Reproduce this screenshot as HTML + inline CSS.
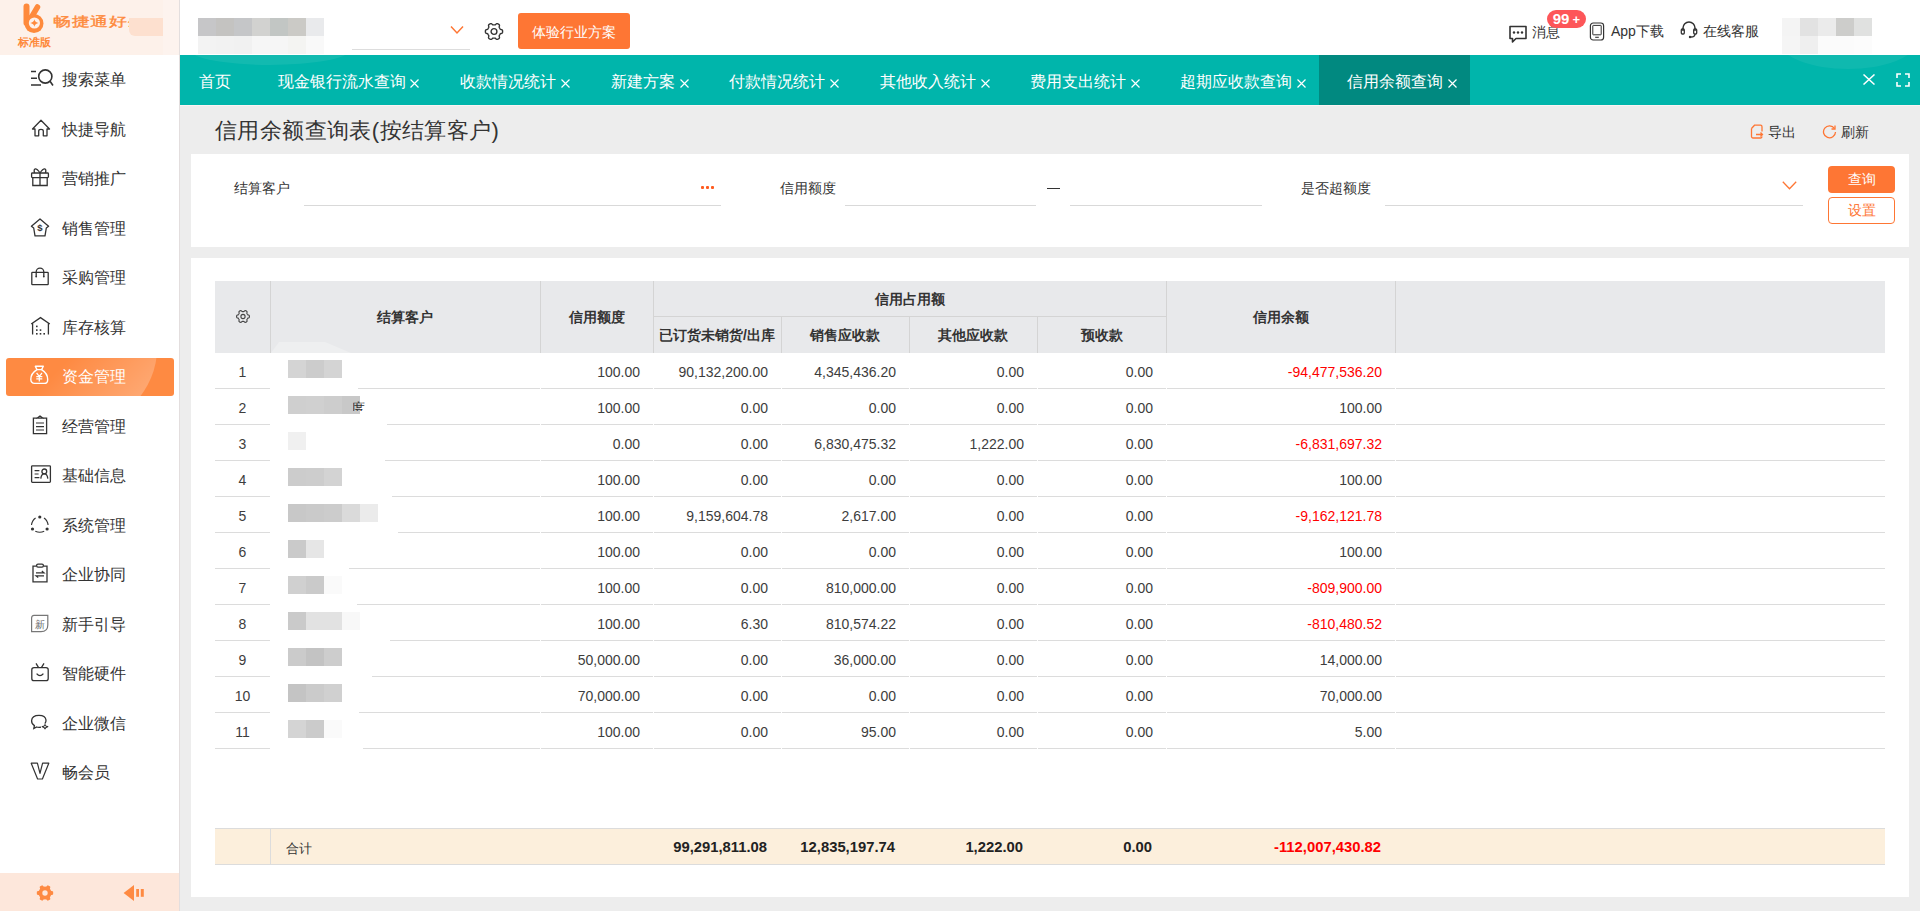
<!DOCTYPE html><html><head><meta charset="utf-8"><title>信用余额查询</title><style>
*{box-sizing:border-box;margin:0;padding:0}
html,body{width:1920px;height:911px;overflow:hidden;background:#ededed;font-family:"Liberation Sans",sans-serif;color:#333}
.a{position:absolute}
.side{position:absolute;left:0;top:0;width:180px;height:911px;background:#fff;border-right:1px solid #e3dede}
.logo{position:absolute;left:0;top:0;width:179px;height:55px;background:#fdf1ea}
.mi{position:absolute;left:62px;font-size:16px;line-height:20px;color:#333;white-space:nowrap}
.ic{position:absolute;left:30px;width:22px;height:22px}
.hdr{position:absolute;left:180px;top:0;width:1740px;height:55px;background:#fff}
.tabs{position:absolute;left:180px;top:55px;width:1740px;height:50px;background:#00b5ab}
.tab{position:absolute;top:0;height:50px;line-height:50px;font-size:16px;color:#fff;white-space:nowrap}
.x{position:absolute;top:24px;width:9px;height:9px}
.card{position:absolute;left:191px;width:1718px;background:#fff}
.lbl{position:absolute;font-size:14px;line-height:16px;color:#333;white-space:nowrap}
.ul{position:absolute;height:1px;background:#d9d9d9}
.btn{position:absolute;width:67px;height:27px;border-radius:4px;font-size:14px;line-height:27px;text-align:center}
.th{position:absolute;background:#e8e9eb;font-size:14px;font-weight:bold;color:#333;text-align:center;white-space:nowrap}
.td{position:absolute;font-size:14px;color:#3d3d3d;transform:scaleY(1.1);text-align:right;white-space:nowrap;line-height:36px;height:36px}
.red{color:#ff0000}
.vl{position:absolute;width:1px;background:#d4d4d4}
.hl{position:absolute;height:1px;background:#dcdcdc}
.blk{position:absolute;width:18px;height:18px}
</style></head><body>
<div class="side"></div>
<div class="logo"></div>
<svg class="a" style="left:23px;top:3px" width="22" height="31" viewBox="0 0 22 31">
<path d="M3.5 3.5 L3.5 20" stroke="#fe8a3c" stroke-width="6" stroke-linecap="round" fill="none"/>
<path d="M14.5 4 L8 15" stroke="#fe8a3c" stroke-width="5.5" stroke-linecap="round" fill="none"/>
<circle cx="11" cy="20.5" r="9.5" fill="#fe8a3c"/>
<circle cx="11.4" cy="20" r="5.6" fill="#fdf1ea"/>
<path d="M11.4 16.2 Q12 19.4 15.6 20 Q12 20.6 11.4 23.8 Q10.8 20.6 7.2 20 Q10.8 19.4 11.4 16.2Z" fill="#fe8a3c"/>
</svg>
<div class="a" style="left:53px;top:10px;width:77px;height:24px;overflow:hidden"><div class="a" style="left:0;top:4px;font-size:13px;line-height:16px;font-weight:normal;-webkit-text-stroke:0.35px #fe8a3c;color:#fe8a3c;letter-spacing:0.5px;white-space:nowrap;transform:scaleX(1.38);transform-origin:0 0">畅捷通好生</div></div>
<div class="a" style="left:129px;top:18px;width:34px;height:18px;background:#fde0cf;border-bottom-left-radius:6px"></div>
<div class="a" style="left:163px;top:0px;width:16px;height:55px;background:#fdf3ee"></div>
<div class="a" style="left:18px;top:36px;font-size:11px;line-height:13px;font-weight:bold;color:#fe8a3c;white-space:nowrap">标准版</div>
<div class="a" style="left:6px;top:358px;width:168px;height:38px;border-radius:3px;overflow:hidden;background:#fe8a42"><div class="a" style="left:-5px;top:-88px;width:156px;height:156px;border-radius:50%;background:linear-gradient(135deg,rgba(255,255,255,0) 50%,rgba(255,255,255,0.25) 85%)"></div></div>
<div class="mi" style="top:70.0px;color:#333">搜索菜单</div>
<div class="mi" style="top:119.5px;color:#333">快捷导航</div>
<div class="mi" style="top:169.0px;color:#333">营销推广</div>
<div class="mi" style="top:218.5px;color:#333">销售管理</div>
<div class="mi" style="top:268.0px;color:#333">采购管理</div>
<div class="mi" style="top:317.5px;color:#333">库存核算</div>
<div class="mi" style="top:367.0px;color:#fff">资金管理</div>
<div class="mi" style="top:416.5px;color:#333">经营管理</div>
<div class="mi" style="top:466.0px;color:#333">基础信息</div>
<div class="mi" style="top:515.5px;color:#333">系统管理</div>
<div class="mi" style="top:565.0px;color:#333">企业协同</div>
<div class="mi" style="top:614.5px;color:#333">新手引导</div>
<div class="mi" style="top:664.0px;color:#333">智能硬件</div>
<div class="mi" style="top:713.5px;color:#333">企业微信</div>
<div class="mi" style="top:763.0px;color:#333">畅会员</div>
<svg class="a" style="left:29px;top:67px" width="26" height="22" viewBox="0 0 26 22"><path d="M2 4.5 H7 M2 11.3 H8 M2 18 H12" stroke="#333" stroke-width="1.6"/><circle cx="16.3" cy="9.5" r="6.6" stroke="#333" stroke-width="1.6" fill="none"/><path d="M21 14.2 L24 18.5" stroke="#333" stroke-width="1.6"/></svg>
<svg class="a" style="left:31px;top:119px" width="20" height="18" viewBox="0 0 20 18"><path d="M1.5 10 L10 1.2 L18.5 10 H16 V16.8 H12.3 V12 Q12.3 10.3 10 10.3 Q7.7 10.3 7.7 12 V16.8 H4 V10 Z" stroke="#333" stroke-width="1.3" fill="none" stroke-linejoin="round"/></svg>
<svg class="a" style="left:30px;top:167px" width="20" height="20" viewBox="0 0 20 20"><rect x="1.6" y="6" width="16.8" height="4.6" rx="0.8" stroke="#333" stroke-width="1.3" fill="none"/><path d="M2.8 10.6 V18.5 H17.2 V10.6 M10 6 V18.5" stroke="#333" stroke-width="1.3" fill="none"/><path d="M10 6 Q7 1.5 5 2 Q3.6 2.6 4.5 6 M10 6 Q13 1.5 15 2 Q16.4 2.6 15.5 6" stroke="#333" stroke-width="1.3" fill="none"/></svg>
<svg class="a" style="left:30px;top:218px" width="20" height="19" viewBox="0 0 20 19"><path d="M10 1 L18.6 8.3 L16.3 10 L15 17.8 H5 L3.7 10 L1.4 8.3 Z" stroke="#333" stroke-width="1.3" fill="none" stroke-linejoin="round"/><text x="10" y="13.3" font-size="9.5" font-family="Liberation Sans" font-weight="bold" text-anchor="middle" fill="#333">$</text></svg>
<svg class="a" style="left:30px;top:266px" width="20" height="20" viewBox="0 0 20 20"><rect x="1.8" y="6.4" width="16.4" height="12.3" rx="0.6" stroke="#333" stroke-width="1.3" fill="none"/><path d="M6.2 10.4 V6 A3.8 3.8 0 0 1 13.8 6 V10.4" stroke="#333" stroke-width="1.3" fill="none"/><circle cx="6.2" cy="10.6" r="0.9" fill="#333"/><circle cx="13.8" cy="10.6" r="0.9" fill="#333"/></svg>
<svg class="a" style="left:30px;top:316px" width="21" height="20" viewBox="0 0 21 20"><path d="M1.2 8 L10.5 1.6 L19.8 8 M2.6 7.4 V18.6 M18.4 7.4 V18.6" stroke="#333" stroke-width="1.3" fill="none"/><g fill="#333"><rect x="6" y="9.6" width="1.6" height="1.6"/><rect x="6" y="13.3" width="1.6" height="1.6"/><rect x="9.7" y="13.3" width="1.6" height="1.6"/><rect x="6" y="17" width="1.6" height="1.6"/><rect x="9.7" y="17" width="1.6" height="1.6"/><rect x="13.4" y="17" width="1.6" height="1.6"/></g></svg>
<svg class="a" style="left:29px;top:365px" width="21" height="20" viewBox="0 0 21 20"><path d="M6.3 1.3 H14.3 L12.6 4.6 H8 Z" stroke="#fff" stroke-width="1.4" fill="none" stroke-linejoin="round"/><path d="M8 4.6 Q1.6 8.4 1.8 14.6 Q2 18.4 5.5 18.4 H15.2 Q18.8 18.4 18.7 14.6 Q18.8 8.4 12.6 4.6" stroke="#fff" stroke-width="1.4" fill="none"/><path d="M7.6 8 L10.3 11.3 L13 8 M7.3 11.6 H13.3 M7.3 13.8 H13.3 M10.3 11.3 V16.4" stroke="#fff" stroke-width="1.2" fill="none"/></svg>
<svg class="a" style="left:31px;top:415px" width="18" height="20" viewBox="0 0 18 20"><path d="M6 3.2 H2.4 V18.6 H15.6 V3.2 H12" stroke="#333" stroke-width="1.3" fill="none"/><path d="M6 3.2 L9 1 L12 3.2 Z" stroke="#333" stroke-width="1.3" fill="none" stroke-linejoin="round"/><path d="M5 8 H13 M5 11.6 H13 M5 15 H13" stroke="#333" stroke-width="1.2"/></svg>
<svg class="a" style="left:30px;top:464px" width="22" height="20" viewBox="0 0 22 20"><rect x="1.6" y="1.8" width="18.8" height="16.6" rx="0.8" stroke="#333" stroke-width="1.3" fill="none"/><path d="M4.6 6.6 H9.4 M4.6 10 H8.6 M4.6 13.6 H9.4" stroke="#333" stroke-width="1.2"/><circle cx="14.3" cy="7.4" r="2.4" stroke="#333" stroke-width="1.3" fill="none"/><path d="M10.8 14.6 Q11.3 9.9 14.3 9.9 Q17.3 9.9 17.8 14.6" stroke="#333" stroke-width="1.3" fill="none"/></svg>
<svg class="a" style="left:30px;top:514px" width="20" height="20" viewBox="0 0 20 20"><g stroke="#333" stroke-width="1.1" fill="none"><path d="M5.6 4 Q2.2 6.2 1.5 11"/><path d="M14 4 Q17.4 6.2 18.1 11"/><path d="M5.3 17.3 Q9.8 19.3 14.2 17.3"/></g><circle cx="9.8" cy="3" r="1.6" fill="#333"/><circle cx="2.5" cy="15" r="1.6" fill="#333"/><circle cx="17.1" cy="15" r="1.6" fill="#333"/></svg>
<svg class="a" style="left:31px;top:563px" width="18" height="20" viewBox="0 0 18 20"><path d="M5.3 3.2 H2 V18.8 H16 V3.2 H12.7" stroke="#333" stroke-width="1.3" fill="none"/><rect x="5.6" y="1.2" width="6.8" height="3" rx="1.4" stroke="#333" stroke-width="1.3" fill="none"/><path d="M5 9.8 H13 L10.8 8 M13 12.8 H5 L7.2 14.6" stroke="#333" stroke-width="1.2" fill="none"/></svg>
<svg class="a" style="left:30px;top:614px" width="20" height="19" viewBox="0 0 20 19"><path d="M4 1.4 H17.8 V11 Q17.8 17.6 11 17.6 H1.6 V4 Q1.6 1.4 4 1.4 Z" stroke="#777" stroke-width="1.2" fill="none"/><text x="9.6" y="13.6" font-size="10" text-anchor="middle" fill="#666">新</text></svg>
<svg class="a" style="left:30px;top:662px" width="20" height="20" viewBox="0 0 20 20"><rect x="1.8" y="5.6" width="16.4" height="13" rx="2.2" stroke="#333" stroke-width="1.3" fill="none"/><path d="M6 1.4 L8.6 5.6 M14 1.4 L11.4 5.6" stroke="#333" stroke-width="1.3" fill="none"/><path d="M6.6 11.6 Q10 15.6 13.4 11.6" stroke="#333" stroke-width="1.3" fill="none"/></svg>
<svg class="a" style="left:30px;top:714px" width="20" height="18" viewBox="0 0 20 18"><path d="M14.8 9.6 Q16.2 8 16 6 Q15.4 1.4 9 1.4 Q2 1.4 1.6 6.6 Q1.4 9.8 4.4 11.6 L3.8 14.6 L6.6 13 Q8.4 13.6 11 13.2" stroke="#333" stroke-width="1.3" fill="none"/><path d="M15 10.5 Q15.4 12.3 17.8 12.6 Q15.4 13 15 15 Q14.6 13 12.2 12.6 Q14.6 12.3 15 10.5 Z" stroke="#333" stroke-width="1.1" fill="none" stroke-linejoin="round"/></svg>
<svg class="a" style="left:30px;top:762px" width="20" height="18" viewBox="0 0 20 18"><path d="M1.2 1.2 H7.4 L10 11.4 L12.6 1.2 H18.8 L12.4 17 H7.6 Z" stroke="#333" stroke-width="1.2" fill="none" stroke-linejoin="round"/></svg>
<div class="a" style="left:0;top:873px;width:179px;height:38px;background:#fde7db"></div>
<svg class="a" style="left:36px;top:884px" width="18" height="18" viewBox="0 0 18 18"><path d="M17.20 9.00 L17.19 8.71 L17.18 8.43 L17.15 8.14 L17.09 7.86 L17.00 7.59 L16.79 7.35 L16.35 7.17 L15.75 7.06 L15.32 6.95 L15.09 6.78 L14.96 6.59 L14.86 6.39 L14.76 6.19 L14.65 6.00 L14.54 5.80 L14.43 5.61 L14.31 5.42 L14.19 5.23 L14.07 5.04 L13.96 4.83 L13.93 4.56 L14.05 4.12 L14.26 3.55 L14.33 3.08 L14.22 2.78 L14.03 2.56 L13.81 2.37 L13.58 2.20 L13.35 2.05 L13.10 1.90 L12.85 1.76 L12.59 1.63 L12.33 1.52 L12.06 1.42 L11.78 1.37 L11.46 1.43 L11.09 1.72 L10.70 2.18 L10.38 2.50 L10.13 2.62 L9.89 2.63 L9.67 2.63 L9.45 2.61 L9.22 2.60 L9.00 2.60 L8.78 2.60 L8.55 2.61 L8.33 2.63 L8.11 2.63 L7.87 2.62 L7.62 2.50 L7.30 2.18 L6.91 1.72 L6.54 1.43 L6.22 1.37 L5.94 1.42 L5.67 1.52 L5.41 1.63 L5.15 1.76 L4.90 1.90 L4.65 2.05 L4.42 2.20 L4.19 2.37 L3.97 2.56 L3.78 2.78 L3.67 3.08 L3.74 3.55 L3.95 4.12 L4.07 4.56 L4.04 4.83 L3.93 5.04 L3.81 5.23 L3.69 5.42 L3.57 5.61 L3.46 5.80 L3.35 6.00 L3.24 6.19 L3.14 6.39 L3.04 6.59 L2.91 6.78 L2.68 6.95 L2.25 7.06 L1.65 7.17 L1.21 7.35 L1.00 7.59 L0.91 7.86 L0.85 8.14 L0.82 8.43 L0.81 8.71 L0.80 9.00 L0.81 9.29 L0.82 9.57 L0.85 9.86 L0.91 10.14 L1.00 10.41 L1.21 10.65 L1.65 10.83 L2.25 10.94 L2.68 11.05 L2.91 11.22 L3.04 11.41 L3.14 11.61 L3.24 11.81 L3.35 12.00 L3.46 12.20 L3.57 12.39 L3.69 12.58 L3.81 12.77 L3.93 12.96 L4.04 13.17 L4.07 13.44 L3.95 13.88 L3.74 14.45 L3.67 14.92 L3.78 15.22 L3.97 15.44 L4.19 15.63 L4.42 15.80 L4.65 15.95 L4.90 16.10 L5.15 16.24 L5.41 16.37 L5.67 16.48 L5.94 16.58 L6.22 16.63 L6.54 16.57 L6.91 16.28 L7.30 15.82 L7.62 15.50 L7.87 15.38 L8.11 15.37 L8.33 15.37 L8.55 15.39 L8.78 15.40 L9.00 15.40 L9.22 15.40 L9.45 15.39 L9.67 15.37 L9.89 15.37 L10.13 15.38 L10.38 15.50 L10.70 15.82 L11.09 16.28 L11.46 16.57 L11.78 16.63 L12.06 16.58 L12.33 16.48 L12.59 16.37 L12.85 16.24 L13.10 16.10 L13.35 15.95 L13.58 15.80 L13.81 15.63 L14.03 15.44 L14.22 15.22 L14.33 14.92 L14.26 14.45 L14.05 13.88 L13.93 13.44 L13.96 13.17 L14.07 12.96 L14.19 12.77 L14.31 12.58 L14.43 12.39 L14.54 12.20 L14.65 12.00 L14.76 11.81 L14.86 11.61 L14.96 11.41 L15.09 11.22 L15.32 11.05 L15.75 10.94 L16.35 10.83 L16.79 10.65 L17.00 10.41 L17.09 10.14 L17.15 9.86 L17.18 9.57 L17.19 9.29 Z" fill="#fe8a42"/><circle cx="9" cy="9" r="2.7" fill="#fde7db"/></svg>
<svg class="a" style="left:123px;top:885px" width="22" height="16" viewBox="0 0 22 16"><path d="M11 0 V16 L0.6 8 Z" fill="#fe8a42"/><rect x="13.2" y="4" width="2.8" height="7.8" fill="#fe8a42"/><rect x="17.8" y="4" width="3" height="7.8" fill="#fe8a42"/></svg>
<div class="hdr"></div>
<div class="blk" style="left:198px;top:18px;background:#c6c6c8"></div>
<div class="blk" style="left:216px;top:18px;background:#c4c3c1"></div>
<div class="blk" style="left:234px;top:18px;background:#c5c6c8"></div>
<div class="blk" style="left:252px;top:18px;background:#d2d2d0"></div>
<div class="blk" style="left:270px;top:18px;background:#c2c6c4"></div>
<div class="blk" style="left:288px;top:18px;background:#cbcac6"></div>
<div class="blk" style="left:306px;top:18px;background:#e9eaec"></div>
<div class="blk" style="left:198px;top:36px;background:#f3f3f3"></div>
<div class="blk" style="left:216px;top:36px;background:#f2f2f2"></div>
<div class="blk" style="left:234px;top:36px;background:#f1f1f1"></div>
<div class="blk" style="left:252px;top:36px;background:#f6f6f6"></div>
<div class="blk" style="left:270px;top:36px;background:#f6f6f6"></div>
<div class="blk" style="left:288px;top:36px;background:#f4f4f2"></div>
<div class="blk" style="left:306px;top:36px;background:#f9f9f9"></div>
<div class="a" style="left:352px;top:49px;width:118px;height:1px;background:#ddd"></div>
<svg class="a" style="left:450px;top:25px" width="14" height="10" viewBox="0 0 14 10"><path d="M1 1.5 L7 8 L13 1.5" stroke="#fe7634" stroke-width="1.5" fill="none"/></svg>
<svg class="a" style="left:484px;top:22px" width="20" height="19" viewBox="0 0 20 19"><path d="M18.60 9.50 L18.59 9.20 L18.57 8.90 L18.52 8.60 L18.44 8.31 L18.29 8.04 L18.03 7.79 L17.60 7.61 L17.08 7.47 L16.65 7.34 L16.37 7.18 L16.19 7.00 L16.06 6.80 L15.94 6.60 L15.83 6.40 L15.72 6.20 L15.60 6.00 L15.48 5.80 L15.37 5.60 L15.26 5.39 L15.19 5.14 L15.20 4.82 L15.30 4.38 L15.44 3.87 L15.49 3.40 L15.41 3.05 L15.25 2.78 L15.04 2.57 L14.80 2.38 L14.56 2.21 L14.30 2.05 L14.04 1.91 L13.77 1.78 L13.48 1.67 L13.19 1.60 L12.88 1.59 L12.54 1.70 L12.16 1.97 L11.78 2.35 L11.45 2.66 L11.18 2.82 L10.93 2.89 L10.69 2.90 L10.46 2.90 L10.23 2.90 L10.00 2.90 L9.77 2.90 L9.54 2.90 L9.31 2.90 L9.07 2.89 L8.82 2.82 L8.55 2.66 L8.22 2.35 L7.84 1.97 L7.46 1.70 L7.12 1.59 L6.81 1.60 L6.52 1.67 L6.23 1.78 L5.96 1.91 L5.70 2.05 L5.44 2.21 L5.20 2.38 L4.96 2.57 L4.75 2.78 L4.59 3.05 L4.51 3.40 L4.56 3.87 L4.70 4.38 L4.80 4.82 L4.81 5.14 L4.74 5.39 L4.63 5.60 L4.52 5.80 L4.40 6.00 L4.28 6.20 L4.17 6.40 L4.06 6.60 L3.94 6.80 L3.81 7.00 L3.63 7.18 L3.35 7.34 L2.92 7.47 L2.40 7.61 L1.97 7.79 L1.71 8.04 L1.56 8.31 L1.48 8.60 L1.43 8.90 L1.41 9.20 L1.40 9.50 L1.41 9.80 L1.43 10.10 L1.48 10.40 L1.56 10.69 L1.71 10.96 L1.97 11.21 L2.40 11.39 L2.92 11.53 L3.35 11.66 L3.63 11.82 L3.81 12.00 L3.94 12.20 L4.06 12.40 L4.17 12.60 L4.28 12.80 L4.40 13.00 L4.52 13.20 L4.63 13.40 L4.74 13.61 L4.81 13.86 L4.80 14.18 L4.70 14.62 L4.56 15.13 L4.51 15.60 L4.59 15.95 L4.75 16.22 L4.96 16.43 L5.20 16.62 L5.44 16.79 L5.70 16.95 L5.96 17.09 L6.23 17.22 L6.52 17.33 L6.81 17.40 L7.12 17.41 L7.46 17.30 L7.84 17.03 L8.22 16.65 L8.55 16.34 L8.82 16.18 L9.07 16.11 L9.31 16.10 L9.54 16.10 L9.77 16.10 L10.00 16.10 L10.23 16.10 L10.46 16.10 L10.69 16.10 L10.93 16.11 L11.18 16.18 L11.45 16.34 L11.78 16.65 L12.16 17.03 L12.54 17.30 L12.88 17.41 L13.19 17.40 L13.48 17.33 L13.77 17.22 L14.04 17.09 L14.30 16.95 L14.56 16.79 L14.80 16.62 L15.04 16.43 L15.25 16.22 L15.41 15.95 L15.49 15.60 L15.44 15.13 L15.30 14.62 L15.20 14.18 L15.19 13.86 L15.26 13.61 L15.37 13.40 L15.48 13.20 L15.60 13.00 L15.72 12.80 L15.83 12.60 L15.94 12.40 L16.06 12.20 L16.19 12.00 L16.37 11.82 L16.65 11.66 L17.08 11.53 L17.60 11.39 L18.03 11.21 L18.29 10.96 L18.44 10.69 L18.52 10.40 L18.57 10.10 L18.59 9.80 Z" stroke="#333" stroke-width="1.4" fill="none" stroke-linejoin="round"/><circle cx="10" cy="9.5" r="2.9" stroke="#333" stroke-width="1.4" fill="none"/></svg>
<div class="a" style="left:518px;top:13px;width:112px;height:36px;border-radius:3px;background:#fe7634;color:#fff;font-size:14px;line-height:38px;text-align:center">体验行业方案</div>
<svg class="a" style="left:1508px;top:24px" width="20" height="20" viewBox="0 0 20 20"><path d="M2 2.5 H18 V14.5 H8 L4.5 18 V14.5 H2 Z" stroke="#333" stroke-width="1.6" fill="none" stroke-linejoin="round"/><circle cx="6" cy="8.5" r="1.2" fill="#333"/><circle cx="10" cy="8.5" r="1.2" fill="#333"/><circle cx="14" cy="8.5" r="1.2" fill="#333"/></svg>
<div class="a" style="left:1532px;top:24px;font-size:14px;line-height:16px;color:#333">消息</div>
<div class="a" style="left:1547px;top:10px;width:39px;height:18px;border-radius:9px;background:#fd5659;color:#fff;font-weight:bold;line-height:18px;text-align:center;white-space:nowrap"><span style="font-size:15px;letter-spacing:-0.3px">99</span><span style="font-size:13px"> +</span></div>
<svg class="a" style="left:1589px;top:22px" width="16" height="19" viewBox="0 0 16 19"><rect x="1.4" y="1" width="13.2" height="17" rx="2.8" stroke="#333" stroke-width="1.2" fill="none"/><rect x="3.8" y="3.4" width="8.4" height="9.4" rx="0.4" stroke="#333" stroke-width="1" fill="none"/><path d="M6.2 15.3 H9.8" stroke="#333" stroke-width="1.1"/></svg>
<div class="a" style="left:1611px;top:22px;font-size:14px;line-height:18px;color:#333;white-space:nowrap">App下载</div>
<svg class="a" style="left:1680px;top:20px" width="18" height="19" viewBox="0 0 18 19"><path d="M3 11 V8 A6 6 0 0 1 15 8 V11" stroke="#333" stroke-width="1.5" fill="none"/><rect x="1.3" y="9" width="3" height="5" rx="1" stroke="#333" stroke-width="1.3" fill="none"/><rect x="13.7" y="9" width="3" height="5" rx="1" stroke="#333" stroke-width="1.3" fill="none"/><path d="M15 14 Q15 17 11 17" stroke="#333" stroke-width="1.3" fill="none"/><circle cx="10" cy="17" r="1.2" fill="#333"/></svg>
<div class="a" style="left:1703px;top:22px;font-size:14px;line-height:18px;color:#333;white-space:nowrap">在线客服</div>
<div class="blk" style="left:1782px;top:18px;background:#f4f4f4"></div>
<div class="blk" style="left:1800px;top:18px;background:#e2e2e2"></div>
<div class="blk" style="left:1818px;top:18px;background:#ebebeb"></div>
<div class="blk" style="left:1836px;top:18px;background:#cdcdcb"></div>
<div class="blk" style="left:1854px;top:18px;background:#e0e1e0"></div>
<div class="blk" style="left:1782px;top:36px;background:#f5f5f5"></div>
<div class="blk" style="left:1800px;top:36px;background:#efefef"></div>
<div class="blk" style="left:1818px;top:36px;background:#fbfbfb"></div>
<div class="blk" style="left:1836px;top:36px;background:#fbfbfb"></div>
<div class="blk" style="left:1854px;top:36px;background:#fcfcfc"></div>
<div class="tabs"></div>
<div class="a" style="left:1319px;top:55px;width:151px;height:50px;background:#018980"></div>
<div class="tab" style="left:199px;top:57px">首页</div>
<div class="tab" style="left:278px;top:57px">现金银行流水查询</div>
<svg class="a" style="left:410px;top:79px" width="9" height="9" viewBox="0 0 9 9"><path d="M0.5 0.5 L8.5 8.5 M8.5 0.5 L0.5 8.5" stroke="#fff" stroke-width="1.2"/></svg>
<div class="tab" style="left:460px;top:57px">收款情况统计</div>
<svg class="a" style="left:561px;top:79px" width="9" height="9" viewBox="0 0 9 9"><path d="M0.5 0.5 L8.5 8.5 M8.5 0.5 L0.5 8.5" stroke="#fff" stroke-width="1.2"/></svg>
<div class="tab" style="left:611px;top:57px">新建方案</div>
<svg class="a" style="left:680px;top:79px" width="9" height="9" viewBox="0 0 9 9"><path d="M0.5 0.5 L8.5 8.5 M8.5 0.5 L0.5 8.5" stroke="#fff" stroke-width="1.2"/></svg>
<div class="tab" style="left:729px;top:57px">付款情况统计</div>
<svg class="a" style="left:830px;top:79px" width="9" height="9" viewBox="0 0 9 9"><path d="M0.5 0.5 L8.5 8.5 M8.5 0.5 L0.5 8.5" stroke="#fff" stroke-width="1.2"/></svg>
<div class="tab" style="left:880px;top:57px">其他收入统计</div>
<svg class="a" style="left:981px;top:79px" width="9" height="9" viewBox="0 0 9 9"><path d="M0.5 0.5 L8.5 8.5 M8.5 0.5 L0.5 8.5" stroke="#fff" stroke-width="1.2"/></svg>
<div class="tab" style="left:1030px;top:57px">费用支出统计</div>
<svg class="a" style="left:1131px;top:79px" width="9" height="9" viewBox="0 0 9 9"><path d="M0.5 0.5 L8.5 8.5 M8.5 0.5 L0.5 8.5" stroke="#fff" stroke-width="1.2"/></svg>
<div class="tab" style="left:1180px;top:57px">超期应收款查询</div>
<svg class="a" style="left:1297px;top:79px" width="9" height="9" viewBox="0 0 9 9"><path d="M0.5 0.5 L8.5 8.5 M8.5 0.5 L0.5 8.5" stroke="#fff" stroke-width="1.2"/></svg>
<div class="tab" style="left:1347px;top:57px">信用余额查询</div>
<svg class="a" style="left:1448px;top:79px" width="9" height="9" viewBox="0 0 9 9"><path d="M0.5 0.5 L8.5 8.5 M8.5 0.5 L0.5 8.5" stroke="#fff" stroke-width="1.2"/></svg>
<svg class="a" style="left:1863px;top:74px" width="12" height="11" viewBox="0 0 12 11"><path d="M0.5 0.5 L11.5 10.5 M11.5 0.5 L0.5 10.5" stroke="#fff" stroke-width="1.5"/></svg>
<svg class="a" style="left:1896px;top:73px" width="14" height="14" viewBox="0 0 14 14"><path d="M1 5 V1 H5 M9 1 H13 V5 M13 9 V13 H9 M5 13 H1 V9" stroke="#fff" stroke-width="1.6" fill="none"/></svg>
<div class="a" style="left:180px;top:105px;width:1740px;height:1px;background:#fbf3f3"></div>
<div class="a" style="left:180px;top:55px;width:1740px;height:50px;overflow:hidden"><div class="a" style="left:10px;top:-20px;width:160px;height:30px;border-radius:50%;background:rgba(255,255,255,0.07)"></div><div class="a" style="left:1600px;top:-40px;width:136px;height:54px;border-radius:50%;background:rgba(255,255,255,0.06)"></div></div>
<div class="a" style="left:215px;top:117px;font-size:22px;line-height:28px;color:#333;white-space:nowrap;letter-spacing:0.4px">信用余额查询表(按结算客户)</div>
<svg class="a" style="left:1750px;top:124px" width="14" height="15" viewBox="0 0 14 15"><path d="M1.5 4.5 L4.5 1.2 H10.5 A1.5 1.5 0 0 1 12 2.7 V7.5 M12 12.5 A1.5 1.5 0 0 1 10.5 14 H3 A1.5 1.5 0 0 1 1.5 12.5 V4.5" stroke="#fe7634" stroke-width="1.3" fill="none"/><path d="M6 10.5 H12.5 M10.5 8.5 L12.5 10.5 L10.5 12.5" stroke="#fe7634" stroke-width="1.3" fill="none"/></svg>
<div class="a" style="left:1768px;top:124px;font-size:13.5px;line-height:17px;color:#333">导出</div>
<svg class="a" style="left:1822px;top:124px" width="15" height="15" viewBox="0 0 15 15"><path d="M12.5 4.5 A6 6 0 1 0 13.5 8" stroke="#fe7634" stroke-width="1.3" fill="none"/><path d="M13 1.5 V5 H9.5" stroke="#fe7634" stroke-width="1.3" fill="none"/></svg>
<div class="a" style="left:1841px;top:124px;font-size:13.5px;line-height:17px;color:#333">刷新</div>
<div class="card" style="top:154px;height:93px"></div>
<div class="lbl" style="left:234px;top:180px">结算客户</div>
<div class="ul" style="left:304px;top:205px;width:417px"></div>
<div class="a" style="left:701px;top:186px;width:3px;height:3px;background:#ff5b1f;border-radius:1px"></div>
<div class="a" style="left:706px;top:186px;width:3px;height:3px;background:#ff5b1f;border-radius:1px"></div>
<div class="a" style="left:711px;top:186px;width:3px;height:3px;background:#ff5b1f;border-radius:1px"></div>
<div class="lbl" style="left:780px;top:180px">信用额度</div>
<div class="ul" style="left:845px;top:205px;width:191px"></div>
<div class="a" style="left:1047px;top:188px;width:13px;height:1px;background:#333"></div>
<div class="ul" style="left:1070px;top:205px;width:192px"></div>
<div class="lbl" style="left:1301px;top:180px">是否超额度</div>
<div class="ul" style="left:1385px;top:205px;width:418px"></div>
<svg class="a" style="left:1782px;top:181px" width="15" height="9" viewBox="0 0 15 9"><path d="M0.8 0.8 L7.5 7.8 L14.2 0.8" stroke="#fe7634" stroke-width="1.3" fill="none"/></svg>
<div class="btn" style="left:1828px;top:166px;background:#fe7634;color:#fff">查询</div>
<div class="btn" style="left:1828px;top:197px;border:1px solid #fe7634;color:#fe7634;line-height:25px;background:#fff">设置</div>
<div class="card" style="top:258px;height:639px"></div>
<div class="th" style="left:215px;top:281px;width:1670px;height:72px"></div>
<div class="th" style="left:270px;top:281px;width:270px;height:72px;line-height:72px;background:transparent">结算客户</div>
<div class="th" style="left:540px;top:281px;width:113px;height:72px;line-height:72px;background:transparent">信用额度</div>
<div class="th" style="left:653px;top:281px;width:513px;height:36px;line-height:36px;background:transparent">信用占用额</div>
<div class="th" style="left:653px;top:317px;width:128px;height:36px;line-height:36px;background:transparent">已订货未销货/出库</div>
<div class="th" style="left:781px;top:317px;width:128px;height:36px;line-height:36px;background:transparent">销售应收款</div>
<div class="th" style="left:909px;top:317px;width:128px;height:36px;line-height:36px;background:transparent">其他应收款</div>
<div class="th" style="left:1037px;top:317px;width:129px;height:36px;line-height:36px;background:transparent">预收款</div>
<div class="th" style="left:1166px;top:281px;width:229px;height:72px;line-height:72px;background:transparent">信用余额</div>
<div class="vl" style="left:270px;top:281px;height:72px"></div>
<div class="vl" style="left:540px;top:281px;height:72px"></div>
<div class="vl" style="left:653px;top:281px;height:72px"></div>
<div class="vl" style="left:1166px;top:281px;height:72px"></div>
<div class="vl" style="left:1395px;top:281px;height:72px"></div>
<div class="vl" style="left:781px;top:317px;height:36px"></div>
<div class="vl" style="left:909px;top:317px;height:36px"></div>
<div class="vl" style="left:1037px;top:317px;height:36px"></div>
<div class="hl" style="left:653px;top:316px;width:513px;background:#d4d4d4"></div>
<svg class="a" style="left:234px;top:308px" width="18" height="17" viewBox="0 0 18 17"><path d="M15.40 8.50 L15.39 8.28 L15.38 8.05 L15.34 7.83 L15.28 7.62 L15.17 7.41 L14.97 7.23 L14.65 7.09 L14.26 6.99 L13.94 6.89 L13.73 6.78 L13.60 6.64 L13.50 6.50 L13.41 6.35 L13.33 6.20 L13.24 6.05 L13.16 5.90 L13.07 5.76 L12.98 5.61 L12.91 5.45 L12.86 5.26 L12.86 5.02 L12.94 4.70 L13.05 4.31 L13.08 3.96 L13.03 3.70 L12.90 3.50 L12.75 3.34 L12.57 3.20 L12.39 3.07 L12.20 2.96 L12.00 2.85 L11.80 2.76 L11.59 2.68 L11.38 2.62 L11.14 2.61 L10.89 2.69 L10.61 2.90 L10.32 3.19 L10.08 3.42 L9.87 3.54 L9.69 3.59 L9.51 3.60 L9.34 3.60 L9.17 3.60 L9.00 3.60 L8.83 3.60 L8.66 3.60 L8.49 3.60 L8.31 3.59 L8.13 3.54 L7.92 3.42 L7.68 3.19 L7.39 2.90 L7.11 2.69 L6.86 2.61 L6.62 2.62 L6.41 2.68 L6.20 2.76 L6.00 2.85 L5.80 2.96 L5.61 3.07 L5.43 3.20 L5.25 3.34 L5.10 3.50 L4.97 3.70 L4.92 3.96 L4.95 4.31 L5.06 4.70 L5.14 5.02 L5.14 5.26 L5.09 5.45 L5.02 5.61 L4.93 5.76 L4.84 5.90 L4.76 6.05 L4.67 6.20 L4.59 6.35 L4.50 6.50 L4.40 6.64 L4.27 6.78 L4.06 6.89 L3.74 6.99 L3.35 7.09 L3.03 7.23 L2.83 7.41 L2.72 7.62 L2.66 7.83 L2.62 8.05 L2.61 8.28 L2.60 8.50 L2.61 8.72 L2.62 8.95 L2.66 9.17 L2.72 9.38 L2.83 9.59 L3.03 9.77 L3.35 9.91 L3.74 10.01 L4.06 10.11 L4.27 10.22 L4.40 10.36 L4.50 10.50 L4.59 10.65 L4.67 10.80 L4.76 10.95 L4.84 11.10 L4.93 11.24 L5.02 11.39 L5.09 11.55 L5.14 11.74 L5.14 11.98 L5.06 12.30 L4.95 12.69 L4.92 13.04 L4.97 13.30 L5.10 13.50 L5.25 13.66 L5.43 13.80 L5.61 13.93 L5.80 14.04 L6.00 14.15 L6.20 14.24 L6.41 14.32 L6.62 14.38 L6.86 14.39 L7.11 14.31 L7.39 14.10 L7.68 13.81 L7.92 13.58 L8.13 13.46 L8.31 13.41 L8.49 13.40 L8.66 13.40 L8.83 13.40 L9.00 13.40 L9.17 13.40 L9.34 13.40 L9.51 13.40 L9.69 13.41 L9.87 13.46 L10.08 13.58 L10.32 13.81 L10.61 14.10 L10.89 14.31 L11.14 14.39 L11.38 14.38 L11.59 14.32 L11.80 14.24 L12.00 14.15 L12.20 14.04 L12.39 13.93 L12.57 13.80 L12.75 13.66 L12.90 13.50 L13.03 13.30 L13.08 13.04 L13.05 12.69 L12.94 12.30 L12.86 11.98 L12.86 11.74 L12.91 11.55 L12.98 11.39 L13.07 11.24 L13.16 11.10 L13.24 10.95 L13.33 10.80 L13.41 10.65 L13.50 10.50 L13.60 10.36 L13.73 10.22 L13.94 10.11 L14.26 10.01 L14.65 9.91 L14.97 9.77 L15.17 9.59 L15.28 9.38 L15.34 9.17 L15.38 8.95 L15.39 8.72 Z" stroke="#444" stroke-width="1.1" fill="none" stroke-linejoin="round"/><circle cx="9" cy="8.5" r="2.1" stroke="#444" stroke-width="1.1" fill="none"/></svg>
<div class="td" style="left:215px;top:352.5px;width:55px;text-align:center">1</div>
<div class="blk" style="left:288px;top:360px;background:#d4d4d4"></div>
<div class="blk" style="left:306px;top:360px;background:#cccccc"></div>
<div class="blk" style="left:324px;top:360px;background:#d4d4d4"></div>
<div class="td" style="left:540px;top:352.5px;width:100px">100.00</div>
<div class="td" style="left:653px;top:352.5px;width:115px">90,132,200.00</div>
<div class="td" style="left:781px;top:352.5px;width:115px">4,345,436.20</div>
<div class="td" style="left:909px;top:352.5px;width:115px">0.00</div>
<div class="td" style="left:1037px;top:352.5px;width:116px">0.00</div>
<div class="td red" style="left:1166px;top:352.5px;width:216px">-94,477,536.20</div>
<div class="hl" style="left:215px;top:388px;width:55px"></div>
<div class="hl" style="left:358px;top:388px;width:182px"></div>
<div class="hl" style="left:541px;top:388px;width:112px"></div>
<div class="hl" style="left:654px;top:388px;width:127px"></div>
<div class="hl" style="left:782px;top:388px;width:127px"></div>
<div class="hl" style="left:910px;top:388px;width:127px"></div>
<div class="hl" style="left:1038px;top:388px;width:128px"></div>
<div class="hl" style="left:1167px;top:388px;width:228px"></div>
<div class="hl" style="left:1396px;top:388px;width:489px"></div>
<div class="td" style="left:215px;top:388.5px;width:55px;text-align:center">2</div>
<div class="blk" style="left:288px;top:396px;background:#cfcfcf"></div>
<div class="blk" style="left:306px;top:396px;background:#d0d0d0"></div>
<div class="blk" style="left:324px;top:396px;background:#cdcdcd"></div>
<div class="blk" style="left:342px;top:396px;background:#c8c8c8"></div>
<div class="td" style="left:540px;top:388.5px;width:100px">100.00</div>
<div class="td" style="left:653px;top:388.5px;width:115px">0.00</div>
<div class="td" style="left:781px;top:388.5px;width:115px">0.00</div>
<div class="td" style="left:909px;top:388.5px;width:115px">0.00</div>
<div class="td" style="left:1037px;top:388.5px;width:116px">0.00</div>
<div class="td" style="left:1166px;top:388.5px;width:216px">100.00</div>
<div class="hl" style="left:215px;top:424px;width:55px"></div>
<div class="hl" style="left:387px;top:424px;width:153px"></div>
<div class="hl" style="left:541px;top:424px;width:112px"></div>
<div class="hl" style="left:654px;top:424px;width:127px"></div>
<div class="hl" style="left:782px;top:424px;width:127px"></div>
<div class="hl" style="left:910px;top:424px;width:127px"></div>
<div class="hl" style="left:1038px;top:424px;width:128px"></div>
<div class="hl" style="left:1167px;top:424px;width:228px"></div>
<div class="hl" style="left:1396px;top:424px;width:489px"></div>
<div class="td" style="left:215px;top:424.5px;width:55px;text-align:center">3</div>
<div class="blk" style="left:288px;top:432px;background:#f0f0f0"></div>
<div class="td" style="left:540px;top:424.5px;width:100px">0.00</div>
<div class="td" style="left:653px;top:424.5px;width:115px">0.00</div>
<div class="td" style="left:781px;top:424.5px;width:115px">6,830,475.32</div>
<div class="td" style="left:909px;top:424.5px;width:115px">1,222.00</div>
<div class="td" style="left:1037px;top:424.5px;width:116px">0.00</div>
<div class="td red" style="left:1166px;top:424.5px;width:216px">-6,831,697.32</div>
<div class="hl" style="left:215px;top:460px;width:55px"></div>
<div class="hl" style="left:385px;top:460px;width:155px"></div>
<div class="hl" style="left:541px;top:460px;width:112px"></div>
<div class="hl" style="left:654px;top:460px;width:127px"></div>
<div class="hl" style="left:782px;top:460px;width:127px"></div>
<div class="hl" style="left:910px;top:460px;width:127px"></div>
<div class="hl" style="left:1038px;top:460px;width:128px"></div>
<div class="hl" style="left:1167px;top:460px;width:228px"></div>
<div class="hl" style="left:1396px;top:460px;width:489px"></div>
<div class="td" style="left:215px;top:460.5px;width:55px;text-align:center">4</div>
<div class="blk" style="left:288px;top:468px;background:#cccccc"></div>
<div class="blk" style="left:306px;top:468px;background:#cdcdcd"></div>
<div class="blk" style="left:324px;top:468px;background:#d3d3d3"></div>
<div class="td" style="left:540px;top:460.5px;width:100px">100.00</div>
<div class="td" style="left:653px;top:460.5px;width:115px">0.00</div>
<div class="td" style="left:781px;top:460.5px;width:115px">0.00</div>
<div class="td" style="left:909px;top:460.5px;width:115px">0.00</div>
<div class="td" style="left:1037px;top:460.5px;width:116px">0.00</div>
<div class="td" style="left:1166px;top:460.5px;width:216px">100.00</div>
<div class="hl" style="left:215px;top:496px;width:55px"></div>
<div class="hl" style="left:392px;top:496px;width:148px"></div>
<div class="hl" style="left:541px;top:496px;width:112px"></div>
<div class="hl" style="left:654px;top:496px;width:127px"></div>
<div class="hl" style="left:782px;top:496px;width:127px"></div>
<div class="hl" style="left:910px;top:496px;width:127px"></div>
<div class="hl" style="left:1038px;top:496px;width:128px"></div>
<div class="hl" style="left:1167px;top:496px;width:228px"></div>
<div class="hl" style="left:1396px;top:496px;width:489px"></div>
<div class="td" style="left:215px;top:496.5px;width:55px;text-align:center">5</div>
<div class="blk" style="left:288px;top:504px;background:#c8c8c8"></div>
<div class="blk" style="left:306px;top:504px;background:#cacaca"></div>
<div class="blk" style="left:324px;top:504px;background:#cccccc"></div>
<div class="blk" style="left:342px;top:504px;background:#dadada"></div>
<div class="blk" style="left:360px;top:504px;background:#ebebeb"></div>
<div class="td" style="left:540px;top:496.5px;width:100px">100.00</div>
<div class="td" style="left:653px;top:496.5px;width:115px">9,159,604.78</div>
<div class="td" style="left:781px;top:496.5px;width:115px">2,617.00</div>
<div class="td" style="left:909px;top:496.5px;width:115px">0.00</div>
<div class="td" style="left:1037px;top:496.5px;width:116px">0.00</div>
<div class="td red" style="left:1166px;top:496.5px;width:216px">-9,162,121.78</div>
<div class="hl" style="left:215px;top:532px;width:55px"></div>
<div class="hl" style="left:398px;top:532px;width:142px"></div>
<div class="hl" style="left:541px;top:532px;width:112px"></div>
<div class="hl" style="left:654px;top:532px;width:127px"></div>
<div class="hl" style="left:782px;top:532px;width:127px"></div>
<div class="hl" style="left:910px;top:532px;width:127px"></div>
<div class="hl" style="left:1038px;top:532px;width:128px"></div>
<div class="hl" style="left:1167px;top:532px;width:228px"></div>
<div class="hl" style="left:1396px;top:532px;width:489px"></div>
<div class="td" style="left:215px;top:532.5px;width:55px;text-align:center">6</div>
<div class="blk" style="left:288px;top:540px;background:#cacaca"></div>
<div class="blk" style="left:306px;top:540px;background:#e6e6e6"></div>
<div class="td" style="left:540px;top:532.5px;width:100px">100.00</div>
<div class="td" style="left:653px;top:532.5px;width:115px">0.00</div>
<div class="td" style="left:781px;top:532.5px;width:115px">0.00</div>
<div class="td" style="left:909px;top:532.5px;width:115px">0.00</div>
<div class="td" style="left:1037px;top:532.5px;width:116px">0.00</div>
<div class="td" style="left:1166px;top:532.5px;width:216px">100.00</div>
<div class="hl" style="left:215px;top:568px;width:55px"></div>
<div class="hl" style="left:349px;top:568px;width:191px"></div>
<div class="hl" style="left:541px;top:568px;width:112px"></div>
<div class="hl" style="left:654px;top:568px;width:127px"></div>
<div class="hl" style="left:782px;top:568px;width:127px"></div>
<div class="hl" style="left:910px;top:568px;width:127px"></div>
<div class="hl" style="left:1038px;top:568px;width:128px"></div>
<div class="hl" style="left:1167px;top:568px;width:228px"></div>
<div class="hl" style="left:1396px;top:568px;width:489px"></div>
<div class="td" style="left:215px;top:568.5px;width:55px;text-align:center">7</div>
<div class="blk" style="left:288px;top:576px;background:#d0d0d0"></div>
<div class="blk" style="left:306px;top:576px;background:#cacaca"></div>
<div class="blk" style="left:324px;top:576px;background:#fafafa"></div>
<div class="td" style="left:540px;top:568.5px;width:100px">100.00</div>
<div class="td" style="left:653px;top:568.5px;width:115px">0.00</div>
<div class="td" style="left:781px;top:568.5px;width:115px">810,000.00</div>
<div class="td" style="left:909px;top:568.5px;width:115px">0.00</div>
<div class="td" style="left:1037px;top:568.5px;width:116px">0.00</div>
<div class="td red" style="left:1166px;top:568.5px;width:216px">-809,900.00</div>
<div class="hl" style="left:215px;top:604px;width:55px"></div>
<div class="hl" style="left:357px;top:604px;width:183px"></div>
<div class="hl" style="left:541px;top:604px;width:112px"></div>
<div class="hl" style="left:654px;top:604px;width:127px"></div>
<div class="hl" style="left:782px;top:604px;width:127px"></div>
<div class="hl" style="left:910px;top:604px;width:127px"></div>
<div class="hl" style="left:1038px;top:604px;width:128px"></div>
<div class="hl" style="left:1167px;top:604px;width:228px"></div>
<div class="hl" style="left:1396px;top:604px;width:489px"></div>
<div class="td" style="left:215px;top:604.5px;width:55px;text-align:center">8</div>
<div class="blk" style="left:288px;top:612px;background:#cacaca"></div>
<div class="blk" style="left:306px;top:612px;background:#e2e2e2"></div>
<div class="blk" style="left:324px;top:612px;background:#e2e2e2"></div>
<div class="blk" style="left:342px;top:612px;background:#f8f8f8"></div>
<div class="td" style="left:540px;top:604.5px;width:100px">100.00</div>
<div class="td" style="left:653px;top:604.5px;width:115px">6.30</div>
<div class="td" style="left:781px;top:604.5px;width:115px">810,574.22</div>
<div class="td" style="left:909px;top:604.5px;width:115px">0.00</div>
<div class="td" style="left:1037px;top:604.5px;width:116px">0.00</div>
<div class="td red" style="left:1166px;top:604.5px;width:216px">-810,480.52</div>
<div class="hl" style="left:215px;top:640px;width:55px"></div>
<div class="hl" style="left:390px;top:640px;width:150px"></div>
<div class="hl" style="left:541px;top:640px;width:112px"></div>
<div class="hl" style="left:654px;top:640px;width:127px"></div>
<div class="hl" style="left:782px;top:640px;width:127px"></div>
<div class="hl" style="left:910px;top:640px;width:127px"></div>
<div class="hl" style="left:1038px;top:640px;width:128px"></div>
<div class="hl" style="left:1167px;top:640px;width:228px"></div>
<div class="hl" style="left:1396px;top:640px;width:489px"></div>
<div class="td" style="left:215px;top:640.5px;width:55px;text-align:center">9</div>
<div class="blk" style="left:288px;top:648px;background:#cbcbcb"></div>
<div class="blk" style="left:306px;top:648px;background:#c3c3c3"></div>
<div class="blk" style="left:324px;top:648px;background:#cdcdcd"></div>
<div class="td" style="left:540px;top:640.5px;width:100px">50,000.00</div>
<div class="td" style="left:653px;top:640.5px;width:115px">0.00</div>
<div class="td" style="left:781px;top:640.5px;width:115px">36,000.00</div>
<div class="td" style="left:909px;top:640.5px;width:115px">0.00</div>
<div class="td" style="left:1037px;top:640.5px;width:116px">0.00</div>
<div class="td" style="left:1166px;top:640.5px;width:216px">14,000.00</div>
<div class="hl" style="left:215px;top:676px;width:55px"></div>
<div class="hl" style="left:372px;top:676px;width:168px"></div>
<div class="hl" style="left:541px;top:676px;width:112px"></div>
<div class="hl" style="left:654px;top:676px;width:127px"></div>
<div class="hl" style="left:782px;top:676px;width:127px"></div>
<div class="hl" style="left:910px;top:676px;width:127px"></div>
<div class="hl" style="left:1038px;top:676px;width:128px"></div>
<div class="hl" style="left:1167px;top:676px;width:228px"></div>
<div class="hl" style="left:1396px;top:676px;width:489px"></div>
<div class="td" style="left:215px;top:676.5px;width:55px;text-align:center">10</div>
<div class="blk" style="left:288px;top:684px;background:#c4c4c4"></div>
<div class="blk" style="left:306px;top:684px;background:#cbcbcb"></div>
<div class="blk" style="left:324px;top:684px;background:#d0d0d0"></div>
<div class="td" style="left:540px;top:676.5px;width:100px">70,000.00</div>
<div class="td" style="left:653px;top:676.5px;width:115px">0.00</div>
<div class="td" style="left:781px;top:676.5px;width:115px">0.00</div>
<div class="td" style="left:909px;top:676.5px;width:115px">0.00</div>
<div class="td" style="left:1037px;top:676.5px;width:116px">0.00</div>
<div class="td" style="left:1166px;top:676.5px;width:216px">70,000.00</div>
<div class="hl" style="left:215px;top:712px;width:55px"></div>
<div class="hl" style="left:359px;top:712px;width:181px"></div>
<div class="hl" style="left:541px;top:712px;width:112px"></div>
<div class="hl" style="left:654px;top:712px;width:127px"></div>
<div class="hl" style="left:782px;top:712px;width:127px"></div>
<div class="hl" style="left:910px;top:712px;width:127px"></div>
<div class="hl" style="left:1038px;top:712px;width:128px"></div>
<div class="hl" style="left:1167px;top:712px;width:228px"></div>
<div class="hl" style="left:1396px;top:712px;width:489px"></div>
<div class="td" style="left:215px;top:712.5px;width:55px;text-align:center">11</div>
<div class="blk" style="left:288px;top:720px;background:#d4d4d4"></div>
<div class="blk" style="left:306px;top:720px;background:#cbcbcb"></div>
<div class="blk" style="left:324px;top:720px;background:#fafafa"></div>
<div class="td" style="left:540px;top:712.5px;width:100px">100.00</div>
<div class="td" style="left:653px;top:712.5px;width:115px">0.00</div>
<div class="td" style="left:781px;top:712.5px;width:115px">95.00</div>
<div class="td" style="left:909px;top:712.5px;width:115px">0.00</div>
<div class="td" style="left:1037px;top:712.5px;width:116px">0.00</div>
<div class="td" style="left:1166px;top:712.5px;width:216px">5.00</div>
<div class="hl" style="left:215px;top:748px;width:55px"></div>
<div class="hl" style="left:363px;top:748px;width:177px"></div>
<div class="hl" style="left:541px;top:748px;width:112px"></div>
<div class="hl" style="left:654px;top:748px;width:127px"></div>
<div class="hl" style="left:782px;top:748px;width:127px"></div>
<div class="hl" style="left:910px;top:748px;width:127px"></div>
<div class="hl" style="left:1038px;top:748px;width:128px"></div>
<div class="hl" style="left:1167px;top:748px;width:228px"></div>
<div class="hl" style="left:1396px;top:748px;width:489px"></div>
<div class="a" style="left:271px;top:342px;width:80px;height:11px;background:#eeeff0;clip-path:polygon(8px 0,54px 0,80px 11px,0 11px)"></div>
<div class="a" style="left:353px;top:401px;width:15px;height:10px;overflow:hidden"><div class="a" style="left:-2px;top:-1px;font-size:14px;line-height:16px;color:#333">度</div></div>
<div class="a" style="left:215px;top:828px;width:1670px;height:37px;background:#fcefdc;border-top:1px solid #dcdcdc;border-bottom:1px solid #dcdcdc"></div>
<div class="vl" style="left:270px;top:829px;height:35px;background:#dcdcdc"></div>
<div class="td" style="left:286px;top:831px;text-align:left;line-height:36px;font-size:13px;transform:none;color:#333">合计</div>
<div class="td" style="left:653px;top:829px;width:114px;font-weight:bold;font-size:14.8px;line-height:37px;transform:none;color:#222">99,291,811.08</div>
<div class="td" style="left:781px;top:829px;width:114px;font-weight:bold;font-size:14.8px;line-height:37px;transform:none;color:#222">12,835,197.74</div>
<div class="td" style="left:909px;top:829px;width:114px;font-weight:bold;font-size:14.8px;line-height:37px;transform:none;color:#222">1,222.00</div>
<div class="td" style="left:1037px;top:829px;width:115px;font-weight:bold;font-size:14.8px;line-height:37px;transform:none;color:#222">0.00</div>
<div class="td red" style="left:1166px;top:829px;width:215px;font-weight:bold;font-size:14.8px;line-height:37px;transform:none;color:#ff0000">-112,007,430.82</div>
</body></html>
